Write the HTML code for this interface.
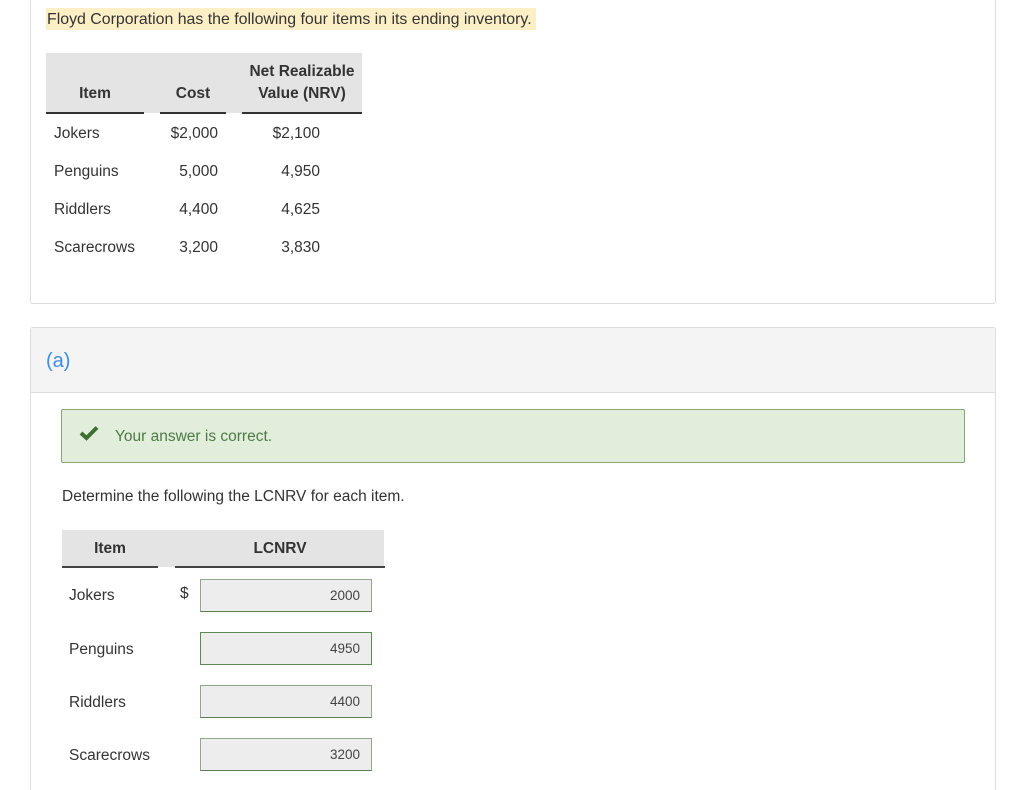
<!DOCTYPE html>
<html><head><style>
*{margin:0;padding:0;box-sizing:border-box}
html,body{width:1024px;height:790px;overflow:hidden}
body{background:#fff;font-family:"Liberation Sans",sans-serif;color:#333;position:relative}
.a{position:absolute;white-space:nowrap}
.t{font-size:15.5px;line-height:20px}
.b{font-weight:bold}
.inp{position:absolute;left:200px;width:172px;height:33px;background:#ededed;border:1px solid #8fa88a;border-bottom-color:#5c7d55;font-size:13.5px;text-align:right;padding-right:11px;line-height:32px;color:#444}
</style></head><body>
<div class="a" style="left:30px;top:0;width:966px;height:304px;border:1px solid #ddd;border-top:none;border-radius:0 0 3px 3px"></div>
<div class="a" style="left:46px;top:8px;width:490px;height:22px;background:#fcefc6;padding-left:1px;line-height:23px;font-size:15.9px">Floyd Corporation has the following four items in its ending inventory.</div>
<div class="a" style="left:46px;top:53px;width:316px;height:60px;background:#e4e4e4"></div>
<div class="a" style="left:46px;top:112px;width:98px;height:2px;background:#333"></div>
<div class="a" style="left:160px;top:112px;width:66px;height:2px;background:#333"></div>
<div class="a" style="left:242px;top:112px;width:120px;height:2px;background:#333"></div>
<div class="a t b" style="left:46px;top:84px;width:98px;text-align:center">Item</div>
<div class="a t b" style="left:160px;top:84px;width:66px;text-align:center">Cost</div>
<div class="a t b" style="left:242px;top:61px;width:120px;text-align:center;line-height:22px">Net Realizable<br>Value (NRV)</div>
<div class="a t" style="left:54px;top:124px">Jokers</div>
<div class="a t" style="left:54px;top:162px">Penguins</div>
<div class="a t" style="left:54px;top:200px">Riddlers</div>
<div class="a t" style="left:54px;top:238px">Scarecrows</div>
<div class="a t" style="left:140px;top:124px;width:78px;text-align:right">$2,000</div>
<div class="a t" style="left:140px;top:162px;width:78px;text-align:right">5,000</div>
<div class="a t" style="left:140px;top:200px;width:78px;text-align:right">4,400</div>
<div class="a t" style="left:140px;top:238px;width:78px;text-align:right">3,200</div>
<div class="a t" style="left:240px;top:124px;width:80px;text-align:right">$2,100</div>
<div class="a t" style="left:240px;top:162px;width:80px;text-align:right">4,950</div>
<div class="a t" style="left:240px;top:200px;width:80px;text-align:right">4,625</div>
<div class="a t" style="left:240px;top:238px;width:80px;text-align:right">3,830</div>

<div class="a" style="left:30px;top:327px;width:966px;height:463px;border:1px solid #ddd;border-bottom:none;border-radius:3px 3px 0 0"></div>
<div class="a" style="left:31px;top:328px;width:964px;height:65px;background:#f4f4f4;border-bottom:1px solid #ddd"></div>
<div class="a" style="left:46px;top:348px;font-size:20px;line-height:26px;color:#3b8ee0">(a)</div>
<div class="a" style="left:61px;top:409px;width:904px;height:54px;background:#e1eedb;border:1px solid #86a67a;border-radius:2px"></div>
<svg class="a" style="left:79px;top:425px" width="20" height="16" viewBox="0 0 20 16"><path d="M2 8 L7.5 13 L18 2.5" fill="none" stroke="#3f6e33" stroke-width="4"/></svg>
<div class="a t" style="left:115px;top:427px;color:#4f7a44">Your answer is correct.</div>
<div class="a t" style="left:62px;top:487px">Determine the following the LCNRV for each item.</div>
<div class="a" style="left:62px;top:530px;width:322px;height:37px;background:#e4e4e4"></div>
<div class="a" style="left:62px;top:566px;width:96px;height:2px;background:#444"></div>
<div class="a" style="left:175px;top:566px;width:210px;height:2px;background:#444"></div>
<div class="a t b" style="left:62px;top:539px;width:96px;text-align:center">Item</div>
<div class="a t b" style="left:175px;top:539px;width:210px;text-align:center">LCNRV</div>
<div class="a t" style="left:69px;top:586px">Jokers</div>
<div class="a t" style="left:69px;top:640px">Penguins</div>
<div class="a t" style="left:69px;top:693px">Riddlers</div>
<div class="a t" style="left:69px;top:746px">Scarecrows</div>
<div class="a t" style="left:180px;top:584px">$</div>
<div class="inp" style="top:579px">2000</div>
<div class="inp" style="top:632px;border-color:#5c8a52">4950</div>
<div class="inp" style="top:685px">4400</div>
<div class="inp" style="top:738px">3200</div>
</body></html>
